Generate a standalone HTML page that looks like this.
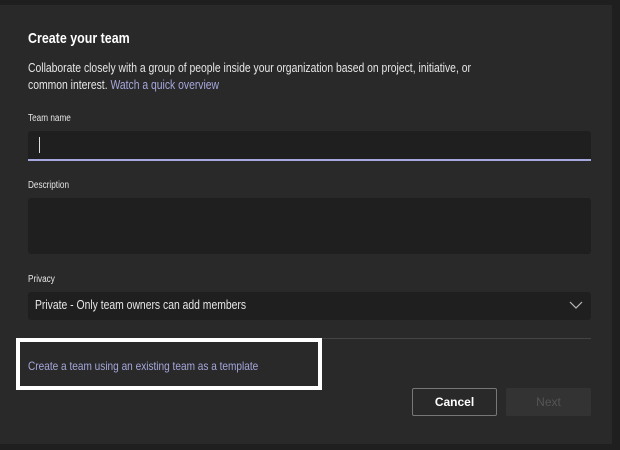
<!DOCTYPE html>
<html><head><meta charset="utf-8"><style>
*{margin:0;padding:0;box-sizing:border-box}
body{width:620px;height:450px;background:#1f1f1f;font-family:"Liberation Sans",sans-serif;position:relative;overflow:hidden}
.dlg{position:absolute;left:0;top:5px;width:612px;height:439px;background:#292929}
.a{position:absolute;transform-origin:0 0;white-space:nowrap}
.t{left:28px;top:30px;font-size:15px;font-weight:bold;color:#fff;transform:scaleX(0.83)}
.d{left:28px;top:60px;font-size:12.5px;line-height:17px;color:#e6e6e6;transform:scaleX(0.83)}
.lnk{color:#a6a7dc}
.lb{font-size:10px;color:#e6e6e6;left:28px;transform:scaleX(0.82)}
.box{left:28px;width:563px;background:#1f1f1f;border-radius:3px}
</style></head><body>
<div class="dlg"></div>
<div class="a t">Create your team</div>
<div class="a d">Collaborate closely with a group of people inside your organization based on project, initiative, or<br>common interest. <span class="lnk">Watch a quick overview</span></div>
<div class="a lb" style="top:113px">Team name</div>
<div class="a box" style="top:131px;height:30px;border-bottom:2px solid #a6a7dc;border-radius:3px 3px 0 0"></div>
<div class="a" style="left:39px;top:137px;width:1px;height:16px;background:#ddd"></div>
<div class="a lb" style="top:180px">Description</div>
<div class="a box" style="top:198px;height:56px"></div>
<div class="a lb" style="top:274px">Privacy</div>
<div class="a box" style="top:292px;height:28px"></div>
<div class="a" style="left:35px;top:298px;font-size:12.5px;color:#e6e6e6;transform:scaleX(0.83)">Private - Only team owners can add members</div>
<svg class="a" style="left:569px;top:301px" width="14" height="9" viewBox="0 0 14 9"><path d="M1 1L7 7L13 1" stroke="#bbb" stroke-width="1.2" fill="none"/></svg>
<div class="a" style="left:28px;top:338px;width:563px;height:1px;background:#444"></div>
<div class="a" style="left:16px;top:338px;width:306px;height:52px;border:4px solid #fff;background:#292929"></div>
<div class="a" style="left:28px;top:359px;font-size:12px;color:#a6a7dc;transform:scaleX(0.84)">Create a team using an existing team as a template</div>
<div class="a" style="left:412px;top:388px;width:85px;height:28px;border:1px solid #777;border-radius:2px;background:#292929;color:#fff;font-size:12px;font-weight:bold;text-align:center;line-height:26px">Cancel</div>
<div class="a" style="left:506px;top:388px;width:85px;height:28px;border-radius:2px;background:#333;color:#555;font-size:12px;text-align:center;line-height:28px">Next</div>
</body></html>
